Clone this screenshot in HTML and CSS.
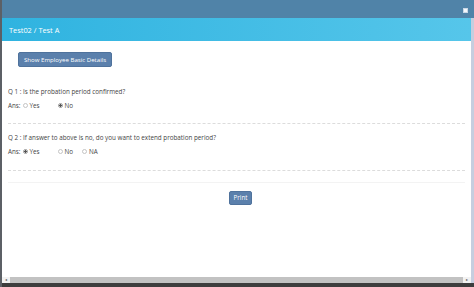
FILE: index.html
```html
<!DOCTYPE html>
<html>
<head>
<meta charset="utf-8">
<link rel="stylesheet" href="styles.css">
</head>
<body>
<div class="screen">
  <div class="lstrip"></div>
  <div class="content">
    <div class="topbar"><span class="topicon"></span></div>
    <div class="mainrow">
      <div class="modal">
        <div class="mheader">Test02 / Test A</div>
        <div class="mbody">
          <div class="btnrow"><span class="btn btn-wide">Show Employee Basic Details</span></div>
          <div class="question q1">
            <div class="qtext">Q 1 : Is the probation period confirmed?</div>
            <div class="ans">
              <span class="lbl">Ans:</span>
              <span class="opt opt-yes"><span class="radio"></span>Yes</span>
              <span class="opt opt-no"><span class="radio on"></span>No</span>
            </div>
          </div>
          <div class="question q2">
            <div class="qtext">Q 2 : If answer to above is no, do you want to extend probation period?</div>
            <div class="ans">
              <span class="lbl">Ans:</span>
              <span class="opt opt-yes"><span class="radio on"></span>Yes</span>
              <span class="opt opt-no"><span class="radio"></span>No</span>
              <span class="opt"><span class="radio"></span>NA</span>
            </div>
          </div>
          <div class="footer"><span class="btn">Print</span></div>
        </div>
        <div class="hscroll">
          <span class="arrow">&#9666;</span>
          <span class="thumb"></span>
          <span class="arrow">&#9656;</span>
        </div>
      </div>
      <div class="rstrip"></div>
    </div>
    <div class="bottombar"></div>
  </div>
</div>
</body>
</html>
```
FILE: styles.css
```css
html, body {
  margin: 0;
  padding: 0;
}
body {
  width: 474px;
  height: 287px;
  overflow: hidden;
  font-family: "Open Sans", "DejaVu Sans", sans-serif;
  background: #3d3d3d;
}
.screen {
  display: flex;
  width: 474px;
  height: 287px;
}
.lstrip {
  width: 2px;
  background: #5c6066;
}
.content {
  flex: 1;
  display: flex;
  flex-direction: column;
}
.topbar {
  height: 18px;
  background: #5083a8;
  display: flex;
  justify-content: flex-end;
  align-items: flex-start;
  padding-right: 6px;
}
.topicon {
  width: 3px;
  height: 3px;
  margin-top: 8px;
  background: #f4f8fc;
  border: 1px solid #c9d7e6;
}
.mainrow {
  flex: 1;
  display: flex;
}
.modal {
  flex: 1;
  display: flex;
  flex-direction: column;
  background: #ffffff;
}
.rstrip {
  width: 3px;
  background: #c6cedf;
}
.mheader {
  height: 23px;
  box-sizing: border-box;
  padding: 7px 0 0 7px;
  background: linear-gradient(to right, #2fb3e0, #56c6ea);
  color: #ffffff;
  font-size: 7.4px;
  line-height: 10px;
}
.mbody {
  flex: 1;
  padding: 11px 6px 0 6px;
  color: #444444;
  font-size: 6.3px;
}
.btnrow {
  margin-left: 10px;
  height: 15px;
}
.btn {
  display: inline-block;
  box-sizing: border-box;
  height: 14px;
  padding: 0 4px;
  background: #5b80ac;
  border: 1px solid #4f729c;
  border-radius: 2px;
  color: #ffffff;
  font-size: 6.2px;
  line-height: 12px;
}
.btn-wide {
  height: 15px;
  line-height: 13px;
  padding: 0 5px;
  font-size: 6.1px;
}
.question {
  border-bottom: 1px dashed #dcdcdc;
}
.q1 {
  margin-top: 20px;
}
.qtext {
  line-height: 9px;
}
.q2 .qtext {
  margin-top: 9px;
}
.ans {
  display: flex;
  align-items: center;
  margin-top: 5px;
  height: 9px;
  margin-bottom: 13px;
}
.q2 .ans {
  margin-bottom: 14px;
}
.lbl {
  margin-right: 2px;
}
.opt {
  display: flex;
  align-items: center;
  gap: 2px;
}
.opt-yes {
  margin-right: 18px;
}
.opt-no {
  margin-right: 9px;
}
.radio {
  width: 3px;
  height: 3px;
  border: 1px solid #c4c4c4;
  border-radius: 50%;
  background: #fff;
}
.radio.on {
  border-color: #9a9a9a;
  background: radial-gradient(circle, #555 0 1px, #fff 1.2px);
}
.footer {
  margin-top: 11px;
  border-top: 1px solid #f3f3f3;
  padding-top: 8px;
  padding-left: 8px;
  display: flex;
  justify-content: center;
}
.hscroll {
  height: 6px;
  display: flex;
  align-items: center;
  background: #f2f2f2;
  padding: 0 2px;
  gap: 2px;
}
.arrow {
  font-size: 4px;
  line-height: 6px;
  color: #555;
  width: 4px;
  text-align: center;
}
.thumb {
  flex: 1;
  height: 6px;
  background: #c2c2c2;
}
.bottombar {
  height: 4px;
  background: #3d3d3d;
}
```
